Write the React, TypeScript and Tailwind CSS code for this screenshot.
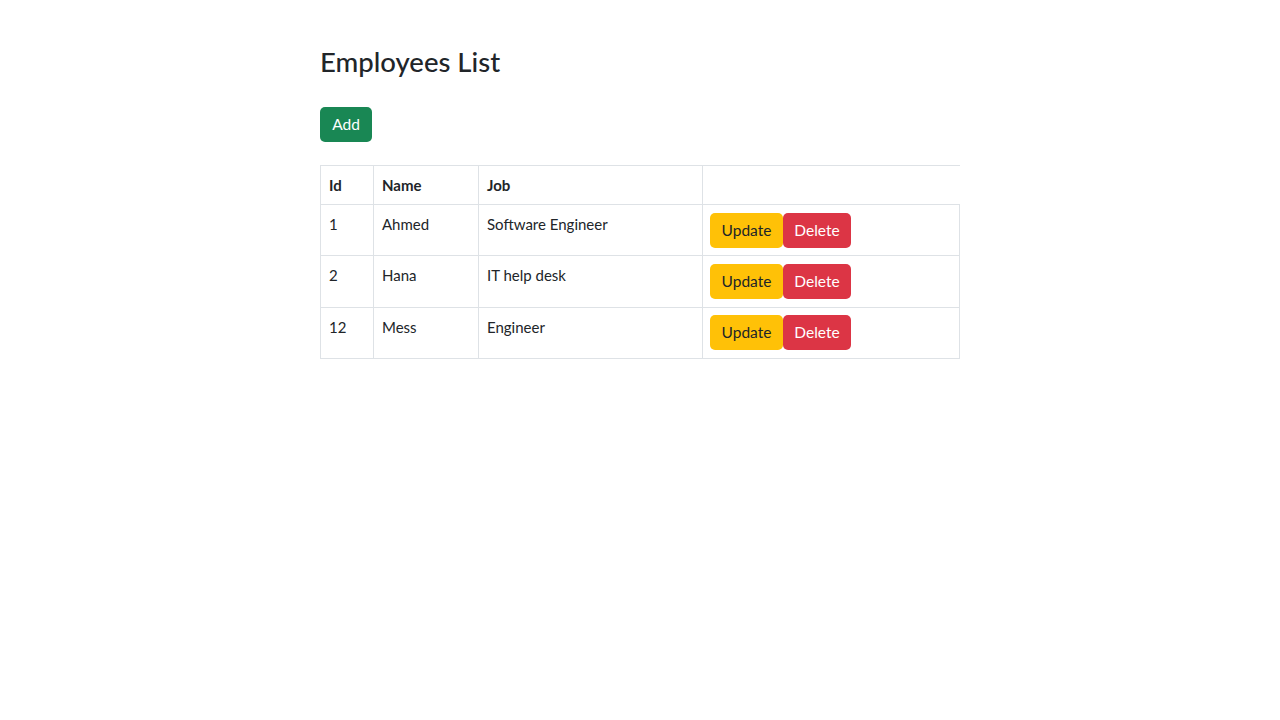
const employees = [
  { id: 1, name: "Ahmed", job: "Software Engineer" },
  { id: 2, name: "Hana", job: "IT help desk" },
  { id: 12, name: "Mess", job: "Engineer" },
];

export default function App() {
  return (
    <div className="min-h-screen bg-white font-['Lato',sans-serif] text-[#212529]">
      <div className="mx-auto w-[640px] pt-[42px]">
        <h2 className="text-[27.5px] font-medium leading-[40px]">Employees List</h2>

        <button className="mt-[25px] h-[35px] w-[52px] rounded-[5px] bg-[#198754] text-[15.5px] text-white">
          Add
        </button>

        {/* Table */}
        <table className="mt-[23px] w-full border-collapse text-[15px]">
          <thead>
            <tr className="h-[39px] border-t border-[#dee2e6]">
              <th className="w-[53px] border-x border-[#dee2e6] px-2 text-left font-bold">Id</th>
              <th className="w-[105px] border-x border-[#dee2e6] px-2 text-left font-bold">Name</th>
              <th className="w-[224px] border-x border-[#dee2e6] px-2 text-left font-bold">Job</th>
              <th className="border-l border-[#dee2e6]"></th>
            </tr>
          </thead>
          <tbody>
            {employees.map((e) => (
              <tr key={e.id} className="h-[51.3px] border border-[#dee2e6]">
                <td className="border-x border-[#dee2e6] px-2 pt-[8px] align-top">{e.id}</td>
                <td className="border-x border-[#dee2e6] px-2 pt-[8px] align-top">{e.name}</td>
                <td className="border-x border-[#dee2e6] px-2 pt-[8px] align-top">{e.job}</td>
                <td className="border-x border-[#dee2e6] pl-[7px] pr-2 align-middle">
                  <div className="flex">
                    <button className="h-[35px] w-[73px] rounded-[5px] bg-[#ffc107] text-[15.5px] text-[#212529]">
                      Update
                    </button>
                    <button className="h-[35px] w-[68px] rounded-[5px] bg-[#dc3545] text-[15.5px] text-white">
                      Delete
                    </button>
                  </div>
                </td>
              </tr>
            ))}
          </tbody>
        </table>
      </div>
    </div>
  );
}
